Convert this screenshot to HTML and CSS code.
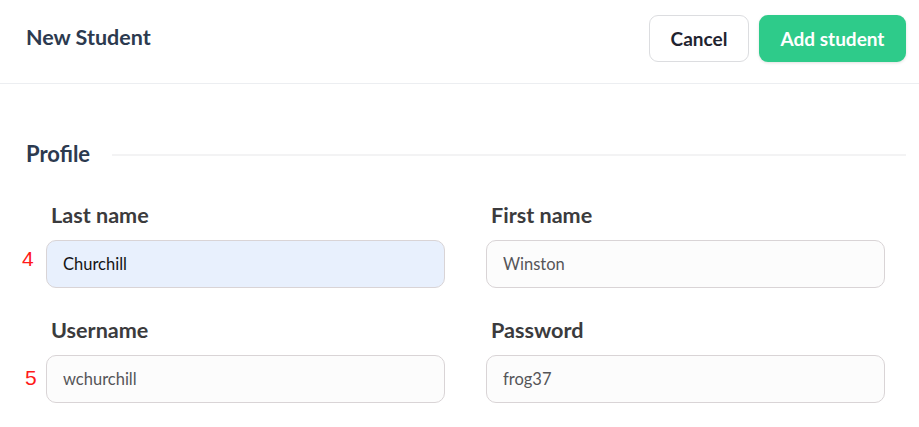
FILE: index.html
```html
<!DOCTYPE html>
<html lang="en">
<head>
<meta charset="utf-8">
<title>New Student</title>
<link rel="stylesheet" href="styles.css">
</head>
<body>
<header class="topbar">
  <h1 class="title">New Student</h1>
  <div class="actions">
    <button class="btn btn-cancel" type="button">Cancel</button>
    <button class="btn btn-primary" type="button">Add student</button>
  </div>
</header>
<main class="content">
  <div class="section-head">
    <h2 class="section-title">Profile</h2>
    <div class="section-rule"></div>
  </div>
  <div class="form-grid">
    <div class="field">
      <label class="label" for="last">Last name</label>
      <div class="control">
        <span class="marker marker-a">4</span>
        <input id="last" class="input input-filled" type="text" value="Churchill">
      </div>
    </div>
    <div class="field">
      <label class="label" for="first">First name</label>
      <div class="control">
        <input id="first" class="input" type="text" value="Winston">
      </div>
    </div>
    <div class="field">
      <label class="label" for="user">Username</label>
      <div class="control">
        <span class="marker marker-b">5</span>
        <input id="user" class="input" type="text" value="wchurchill">
      </div>
    </div>
    <div class="field">
      <label class="label" for="pass">Password</label>
      <div class="control">
        <input id="pass" class="input" type="text" value="frog37">
      </div>
    </div>
  </div>
</main>
</body>
</html>
```
FILE: styles.css
```css
* { box-sizing: border-box; }
html, body { margin: 0; padding: 0; background: #ffffff; }
body {
  font-family: Lato, "Open Sans", "Liberation Sans", sans-serif;
  color: #2d3748;
}
.topbar {
  display: flex;
  align-items: center;
  justify-content: space-between;
  padding: 15px 13px 21px 26px;
  border-bottom: 1px solid #eceef1;
}
.title {
  margin: 0 0 4px 0;
  font-size: 21.5px;
  font-weight: 700;
  color: #2c3a4f;
}
.actions {
  display: flex;
  gap: 10px;
}
.btn {
  height: 47px;
  border-radius: 9px;
  font-family: Lato, "Liberation Sans", sans-serif;
  font-size: 19px;
  font-weight: 700;
  cursor: pointer;
}
.btn-cancel {
  width: 100px;
  background: #ffffff;
  border: 1px solid #dcdde0;
  color: #1f2430;
}
.btn-primary {
  width: 147px;
  background: #2ecb8a;
  border: none;
  color: #ffffff;
  box-shadow: 0 1px 3px rgba(0, 0, 0, 0.12);
}
.content {
  padding: 56px 13px 0 26px;
}
.section-head {
  display: flex;
  align-items: center;
  gap: 22px;
}
.section-title {
  margin: 0;
  font-size: 22px;
  font-weight: 700;
  color: #2c3a4f;
}
.section-rule {
  flex: 1;
  height: 2px;
  background: #f3f3f4;
  margin-top: 3px;
}
.form-grid {
  display: grid;
  grid-template-columns: 1fr 1fr;
  column-gap: 41px;
  row-gap: 29px;
  padding: 0 21px 0 20px;
  margin-top: 35px;
}
.field {
  display: flex;
  flex-direction: column;
}
.label {
  font-size: 21.6px;
  font-weight: 700;
  color: #3b3b3d;
  padding-left: 5px;
  margin-bottom: 12px;
  line-height: 26px;
}
.control {
  position: relative;
}
.input {
  display: block;
  width: 100%;
  height: 48px;
  padding: 0 16px;
  border: 1px solid #d9d4d6;
  border-radius: 10px;
  background: #fcfcfc;
  font-family: Lato, "Liberation Sans", sans-serif;
  font-size: 16.5px;
  color: #555558;
  outline: none;
}
.input-filled {
  background: #e8f0fd;
  color: #141414;
}
.marker {
  position: absolute;
  font-family: "Liberation Sans", Arial, sans-serif;
  font-size: 21px;
  color: #ff1a1a;
  line-height: 24px;
}
.marker-a { left: -24px; top: 7px; }
.marker-b { left: -21px; top: 11px; }
```
